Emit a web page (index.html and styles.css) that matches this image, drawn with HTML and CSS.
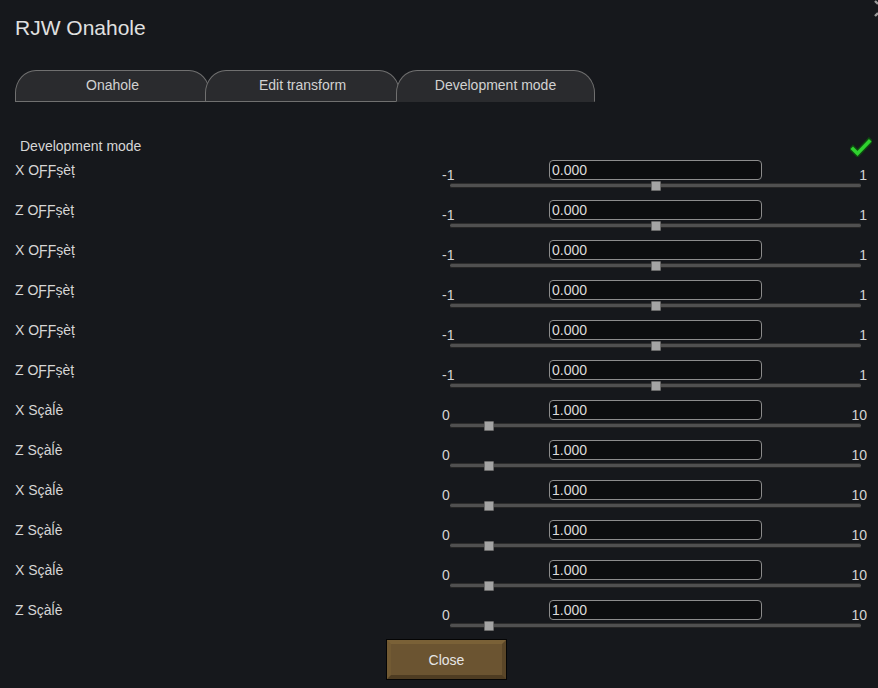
FILE: index.html
```html
<!DOCTYPE html>
<html lang="en">
<head>
<meta charset="utf-8">
<title>RJW Onahole</title>
<link rel="stylesheet" href="styles.css">
</head>
<body>
<div class="window">
  <svg class="corner-x" width="6" height="17" viewBox="0 0 6 17"><path d="M3 1 L6 4 M3 16 L6 13" stroke="#9a9a9a" stroke-width="2.4" fill="none"/></svg>
  <h1 class="title">RJW Onahole</h1>
  <div class="tabs">
    <div class="tab">Onahole</div>
    <div class="tab">Edit transform</div>
    <div class="tab tab-active">Development mode</div>
  </div>

  <div class="dev-row">
    <span class="dev-label">Development mode</span>
    <svg class="check" width="22" height="20" viewBox="0 0 22 20">
      <path d="M3 12 L7.5 16.5 L19 4.5" stroke="#0e4a10" stroke-width="6.5" fill="none" stroke-linejoin="miter" stroke-linecap="square"/>
      <path d="M3 12 L7.5 16.5 L19 4.5" stroke="#2fd22f" stroke-width="3.6" fill="none" stroke-linejoin="miter" stroke-linecap="square"/>
    </svg>
  </div>

  <div class="rows">
    <div class="row">
      <div class="row-label">X OƑƑșèț</div>
      <div class="control">
        <div class="control-top"><span class="min">-1</span><div class="field">0.000</div><span class="max">1</span></div>
        <div class="track"><span class="handle" style="left:50%"></span></div>
      </div>
    </div>
    <div class="row">
      <div class="row-label">Z OƑƑșèț</div>
      <div class="control">
        <div class="control-top"><span class="min">-1</span><div class="field">0.000</div><span class="max">1</span></div>
        <div class="track"><span class="handle" style="left:50%"></span></div>
      </div>
    </div>
    <div class="row">
      <div class="row-label">X OƑƑșèț</div>
      <div class="control">
        <div class="control-top"><span class="min">-1</span><div class="field">0.000</div><span class="max">1</span></div>
        <div class="track"><span class="handle" style="left:50%"></span></div>
      </div>
    </div>
    <div class="row">
      <div class="row-label">Z OƑƑșèț</div>
      <div class="control">
        <div class="control-top"><span class="min">-1</span><div class="field">0.000</div><span class="max">1</span></div>
        <div class="track"><span class="handle" style="left:50%"></span></div>
      </div>
    </div>
    <div class="row">
      <div class="row-label">X OƑƑșèț</div>
      <div class="control">
        <div class="control-top"><span class="min">-1</span><div class="field">0.000</div><span class="max">1</span></div>
        <div class="track"><span class="handle" style="left:50%"></span></div>
      </div>
    </div>
    <div class="row">
      <div class="row-label">Z OƑƑșèț</div>
      <div class="control">
        <div class="control-top"><span class="min">-1</span><div class="field">0.000</div><span class="max">1</span></div>
        <div class="track"><span class="handle" style="left:50%"></span></div>
      </div>
    </div>
    <div class="row">
      <div class="row-label">X Sçàĺè</div>
      <div class="control">
        <div class="control-top"><span class="min">0</span><div class="field">1.000</div><span class="max">10</span></div>
        <div class="track"><span class="handle" style="left:9.5%"></span></div>
      </div>
    </div>
    <div class="row">
      <div class="row-label">Z Sçàĺè</div>
      <div class="control">
        <div class="control-top"><span class="min">0</span><div class="field">1.000</div><span class="max">10</span></div>
        <div class="track"><span class="handle" style="left:9.5%"></span></div>
      </div>
    </div>
    <div class="row">
      <div class="row-label">X Sçàĺè</div>
      <div class="control">
        <div class="control-top"><span class="min">0</span><div class="field">1.000</div><span class="max">10</span></div>
        <div class="track"><span class="handle" style="left:9.5%"></span></div>
      </div>
    </div>
    <div class="row">
      <div class="row-label">Z Sçàĺè</div>
      <div class="control">
        <div class="control-top"><span class="min">0</span><div class="field">1.000</div><span class="max">10</span></div>
        <div class="track"><span class="handle" style="left:9.5%"></span></div>
      </div>
    </div>
    <div class="row">
      <div class="row-label">X Sçàĺè</div>
      <div class="control">
        <div class="control-top"><span class="min">0</span><div class="field">1.000</div><span class="max">10</span></div>
        <div class="track"><span class="handle" style="left:9.5%"></span></div>
      </div>
    </div>
    <div class="row">
      <div class="row-label">Z Sçàĺè</div>
      <div class="control">
        <div class="control-top"><span class="min">0</span><div class="field">1.000</div><span class="max">10</span></div>
        <div class="track"><span class="handle" style="left:9.5%"></span></div>
      </div>
    </div>
  </div>

  <div class="footer">
    <button class="close-btn">Close</button>
  </div>
</div>
</body>
</html>
```

FILE: styles.css
```css
html, body {
  margin: 0;
  padding: 0;
  background: #16181c;
  overflow: hidden;
}

body {
  font-family: "Liberation Sans", Arial, sans-serif;
  font-size: 14px;
  color: #d6d6d6;
}

.window {
  position: relative;
  height: 688px;
  box-sizing: border-box;
  padding: 16px 0 0 15px;
}

.corner-x {
  position: absolute;
  top: 0;
  left: 872px;
}

.title {
  margin: 0;
  font-size: 21px;
  line-height: 24px;
  font-weight: normal;
  color: #e0e0e0;
}

.tabs {
  display: flex;
  margin-top: 30px;
  height: 31px;
}

.tab {
  width: 193px;
  height: 30px;
  box-sizing: content-box;
  background: #2a2b2e;
  border: 1px solid #707070;
  border-radius: 21px 21px 0 0 / 23px 23px 0 0;
  color: #d2d2d2;
  font-size: 14px;
  line-height: 29px;
  text-align: center;
}

.tab + .tab {
  margin-left: -5px;
}

.tab-active {
  border-bottom-color: #2a2b2e;
  width: 197px;
}

.tab-active.tab {
  margin-left: -4px;
}

.dev-row {
  display: flex;
  justify-content: space-between;
  align-items: flex-start;
  width: 857px;
  height: 20px;
  margin-top: 35px;
  margin-bottom: 4px;
}

.dev-label {
  padding-left: 5px;
  line-height: 20px;
}

.check {
  margin-top: 1px;
}

.rows {
  display: flex;
  flex-direction: column;
}

.row {
  display: grid;
  grid-template-columns: 426px 429px;
  height: 40px;
}

.row-label {
  line-height: 20px;
  color: #d6d6d6;
}

.control {
  display: flex;
  flex-direction: column;
}

.control-top {
  display: grid;
  grid-template-columns: 1fr 213px 1fr;
  height: 23px;
}

.min,
.max {
  padding-top: 7px;
  line-height: 16px;
  color: #d4d4d4;
}

.min {
  padding-left: 1px;
}

.max {
  text-align: right;
  padding-right: 3px;
}

.field {
  height: 20px;
  box-sizing: border-box;
  background: #0c0d0f;
  border: 1px solid #8c8c8c;
  border-radius: 4px;
  padding-left: 2px;
  line-height: 18px;
  font-size: 14px;
  color: #dcdcdc;
}

.track {
  position: relative;
  margin: 0 9px;
  height: 5px;
  box-sizing: border-box;
  background: #505050;
  border-top: 1px solid #2c2c2c;
  border-bottom: 1px solid #262626;
  border-radius: 2px;
}

.handle {
  position: absolute;
  top: -3px;
  width: 10px;
  height: 10px;
  box-sizing: border-box;
  margin-left: -5px;
  background: #a4a4a4;
  border: 1px solid #6a6a6a;
  border-radius: 1px;
}

.footer {
  display: flex;
  justify-content: center;
}

.close-btn {
  width: 119px;
  height: 39px;
  box-sizing: border-box;
  background: #6b5431;
  border-style: solid;
  border-width: 4px;
  border-color: #7a6137 #5a4628 #4e3c22 #725a33;
  box-shadow: 0 0 0 1px #050505;
  font-family: "Liberation Sans", Arial, sans-serif;
  font-size: 14px;
  color: #e6e6e6;
  padding: 0;
  margin: 0;
}
```
